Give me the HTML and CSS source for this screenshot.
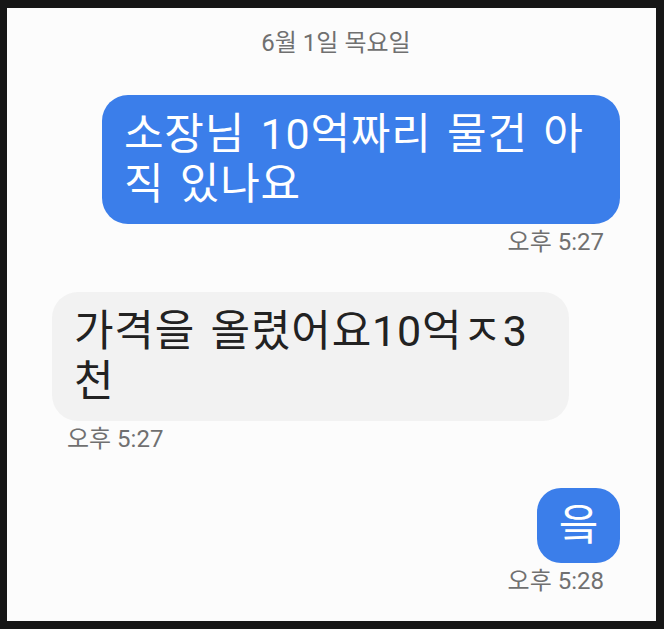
FILE: index.html
```html
<!DOCTYPE html>
<html lang="ko">
<head>
<meta charset="utf-8">
<link rel="stylesheet" href="styles.css">
</head>
<body>
<div class="frame">
  <div class="chat">
    <div class="date">6월 1일 목요일</div>
    <div class="msg sent">
      <div class="bubble b1">소장님 10억짜리 물건 아직 있나요</div>
      <div class="time">오후 5:27</div>
    </div>
    <div class="msg recv">
      <div class="bubble b2">가격을 올렸어요10억ㅈ3천</div>
      <div class="time">오후 5:27</div>
    </div>
    <div class="msg sent">
      <div class="bubble b3">읔</div>
      <div class="time">오후 5:28</div>
    </div>
  </div>
</div>
</body>
</html>
```
FILE: styles.css
```css
* { box-sizing: border-box; }
html, body { margin: 0; padding: 0; }
body { background: #161616; font-family: Roboto, "Noto Sans CJK KR", sans-serif; }
.frame {
  width: 664px;
  height: 629px;
  border-style: solid;
  border-color: #161616;
  border-width: 8px 8px 8px 7px;
  background: #fcfcfc;
}
.chat {
  display: flex;
  flex-direction: column;
  padding: 0 36px 0 45px;
}
.date {
  text-align: center;
  font-size: 24px;
  color: #707070;
  line-height: 30px;
  margin-top: 20px;
}
.msg { display: flex; flex-direction: column; }
.sent { align-items: flex-end; }
.recv { align-items: flex-start; }
.bubble {
  font-size: 43px;
  line-height: 50px;
  letter-spacing: 0.8px;
  word-spacing: 4px;
  border-radius: 26px;
  padding: 14px 20px 15px 22px;
  word-break: break-all;
}
.sent .bubble { background: #3b7eea; color: #ffffff; }
.recv .bubble { background: #f2f2f2; color: #222222; }
.b1 { width: 518px; margin-top: 37px; }
.b2 { width: 517px; margin-top: 36px; }
.b3 { margin-top: 35px; padding: 12px 21px 13px 22px; border-radius: 24px; }
.time {
  font-size: 24px;
  color: #707070;
  line-height: 28px;
  margin-top: 4px;
}
.sent .time { margin-right: 16px; }
.recv .time { margin-left: 15px; }
```
